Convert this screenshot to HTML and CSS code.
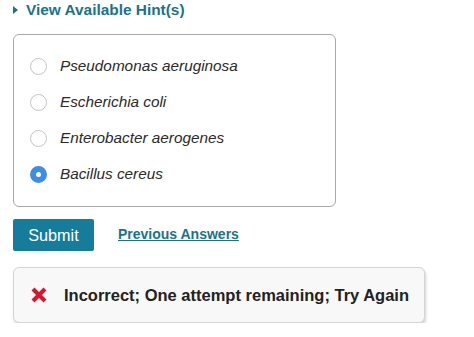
FILE: index.html
```html
<!DOCTYPE html>
<html>
<head>
<meta charset="utf-8">
<link rel="stylesheet" href="styles.css">
</head>
<body>
<div class="page">
  <div class="hint"><span class="tri"></span><span>View Available Hint(s)</span></div>
  <div class="choices">
    <label class="choice"><span class="radio"></span><span class="lbl">Pseudomonas aeruginosa</span></label>
    <label class="choice"><span class="radio"></span><span class="lbl">Escherichia coli</span></label>
    <label class="choice"><span class="radio"></span><span class="lbl">Enterobacter aerogenes</span></label>
    <label class="choice"><span class="radio on"></span><span class="lbl">Bacillus cereus</span></label>
  </div>
  <div class="actions">
    <span class="submit">Submit</span>
    <a class="prev" href="#">Previous Answers</a>
  </div>
  <div class="feedback">
    <svg class="x" width="16" height="16" viewBox="0 0 16 16"><path d="M2 2 L14 14 M14 2 L2 14" stroke="#d8152f" stroke-width="4.2" stroke-linecap="butt"/></svg>
    <span class="msg">Incorrect; One attempt remaining; Try Again</span>
  </div>
</div>
</body>
</html>
```
FILE: styles.css
```css
html, body { margin: 0; padding: 0; background: #fff; }
body { font-family: "Liberation Sans", Arial, sans-serif; color: #222; }
.page { padding: 0 0 0 13px; width: 420px; }
.hint { display: flex; align-items: center; gap: 8px; height: 22px; color: #18738f; font-weight: bold; font-size: 15.4px; margin-top: -1px; }
.tri { width: 0; height: 0; border-top: 4px solid transparent; border-bottom: 4px solid transparent; border-left: 5px solid #18738f; }
.choices { margin-top: 13px; width: 323px; height: 173px; border: 1px solid #a9a9a9; border-radius: 6px; box-sizing: border-box; padding: 13px 0 0 16px; display: flex; flex-direction: column; }
.choice { display: flex; align-items: center; height: 36px; }
.radio { width: 17px; height: 17px; border: 1px solid #c4c4c4; border-radius: 50%; box-sizing: border-box; margin-right: 13px; flex: none; }
.radio.on { border: 6px solid #3b8ee8; background: #fff; }
.lbl { font-style: italic; font-size: 15.3px; color: #2a2a2a; }
.actions { display: flex; align-items: center; margin-top: 12px; gap: 24px; }
.submit { display: inline-flex; align-items: center; justify-content: center; width: 81px; height: 32px; background: #167c9c; color: #fff; font-size: 16.2px; border-radius: 2px; }
.prev { color: #18738f; font-weight: bold; font-size: 14px; text-decoration: underline; margin-top: -2px; }
.feedback { margin-top: 16px; width: 412px; height: 56px; box-sizing: border-box; border: 1px solid #d4d4d4; border-radius: 6px; background: #f8f8f8; box-shadow: 1px 2px 3px rgba(0,0,0,0.18); display: flex; align-items: center; padding-left: 17px; gap: 17px; }
.x { flex: none; }
.msg { font-weight: bold; font-size: 16.5px; color: #222; }
```
